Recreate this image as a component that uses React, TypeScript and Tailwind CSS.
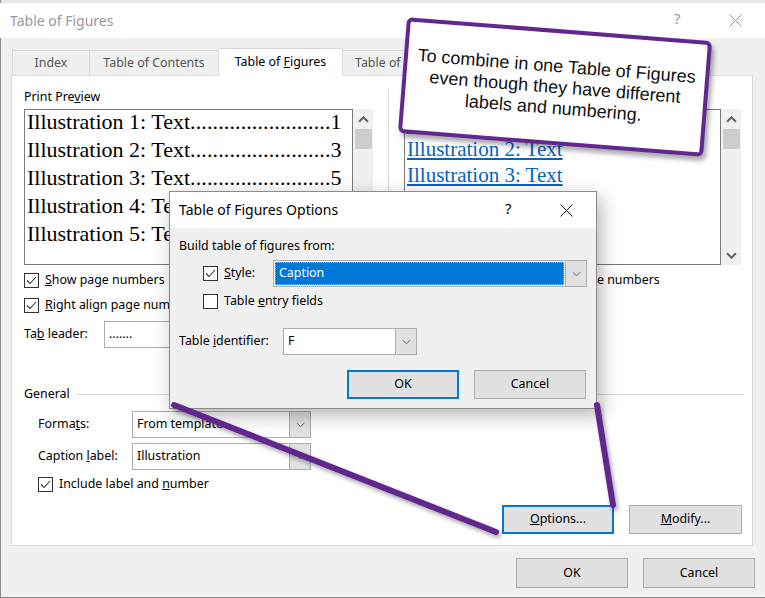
import React from "react";

const Chevron = ({ dir = "down", bold = false }: { dir?: "up" | "down"; bold?: boolean }) => (
  <svg width={bold ? 11 : 9} height={bold ? 7 : 6} viewBox="0 0 10 6" className="block">
    <path
      d={dir === "down" ? "M1 1 L5 5 L9 1" : "M1 5 L5 1 L9 5"}
      fill="none"
      stroke={bold ? "#606060" : "#555"}
      strokeWidth={bold ? 1.8 : 1}
    />
  </svg>
);

const Check = ({ checked }: { checked: boolean }) => (
  <div className="w-[15px] h-[15px] border border-[#333] bg-white shrink-0 flex items-center justify-center">
    {checked && (
      <svg width="11" height="9" viewBox="0 0 11 9" className="block">
        <path d="M1 4.5 L4 7.5 L10 1" fill="none" stroke="#333" strokeWidth="1.1" />
      </svg>
    )}
  </div>
);

const Select = ({ value, w, cls = "" }: { value: string; w: string; cls?: string }) => (
  <div className={`${w} h-[27px] border border-[#adadad] bg-white flex ${cls}`}>
    <div className="flex-1 flex items-center pl-[4px] overflow-hidden whitespace-nowrap">{value}</div>
    <div className="w-[21px] bg-[#e1e1e1] border-l border-[#adadad] flex items-center justify-center">
      <Chevron />
    </div>
  </div>
);

const Btn = ({ children, w, focus = false, cls = "" }: { children: React.ReactNode; w: string; focus?: boolean; cls?: string }) => (
  <div
    className={`${w} h-[29px] bg-[#e1e1e1] flex items-center justify-center ${
      focus ? "border-2 border-[#0078d7]" : "border border-[#adadad]"
    } ${cls}`}
  >
    {children}
  </div>
);

const DOTS = ".........................";

const PreviewLine = ({ n, p }: { n: number; p: number }) => (
  <div className="h-[28px] flex items-center whitespace-nowrap">
    <span>{`Illustration ${n}: Text`}</span>
    <span className="tracking-[0.12px]">{DOTS}</span>
    <span>{p}</span>
  </div>
);

const Scrollbar = () => (
  <div className="w-[20px] bg-[#f0f0f0] flex flex-col items-center">
    <div className="h-[20px] flex items-center justify-center">
      <Chevron dir="up" bold />
    </div>
    <div className="w-[17px] h-[20px] bg-[#cdcdcd]" />
    <div className="flex-1" />
    <div className="h-[20px] flex items-center justify-center">
      <Chevron dir="down" bold />
    </div>
  </div>
);

export default function App() {
  return (
    <div className="w-[765px] h-[598px] relative overflow-hidden bg-[#f0f0f0] text-[12.4px] text-black font-['Noto_Sans',sans-serif] leading-none">
      {/* desktop strip */}
      <div className="h-[3px] bg-[#e6e6e6]" />
      <div className="absolute left-0 top-0 bottom-0 w-px bg-[#8a8a8a]" />
      <div className="absolute left-0 right-0 bottom-0 h-px bg-[#8a8a8a]" />
      {/* Title bar */}
      <div className="h-[35px] bg-white flex items-center pl-[10px] relative">
        <span className="text-[14px] text-[#999]">Table of Figures</span>
        <span className="absolute left-[674px] top-[8px] text-[15px] text-[#999]">?</span>
        <svg className="absolute left-[729px] top-[11px]" width="13" height="13" viewBox="0 0 13 13">
          <path d="M0.5 0.5 L12.5 12.5 M12.5 0.5 L0.5 12.5" stroke="#999" strokeWidth="1" />
        </svg>
      </div>

      {/* Tabs */}
      <div className="flex items-end h-[37px] pl-[12px] text-[#555]">
        <div className="w-[78px] h-[25px] border border-b-0 border-[#d9d9d9] flex items-center justify-center pt-[1px]">Index</div>
        <div className="w-[129px] h-[25px] border-r border-t border-[#d9d9d9] flex items-center justify-center pt-[1px]">Table of Contents</div>
        <div className="w-[124px] h-[28px] border-r border-t border-[#d9d9d9] bg-white text-black flex items-center justify-center -mb-px relative z-10">
          Table of&nbsp;<u>F</u>igures
        </div>
        <div className="w-[130px] h-[25px] border-r border-t border-[#d9d9d9] flex items-center pl-[12px] pt-[1px]">Table of Authorities</div>
      </div>

      {/* Panel */}
      <div className="ml-[11px] w-[742px] h-[471px] border border-[#d9d9d9] bg-white flex flex-col pl-[12px]">
        <div className="flex mt-[15px]">
          {/* left column */}
          <div className="w-[349px] flex flex-col">
            <div className="h-[14px] mb-[4px]">
              Print Pre<u>v</u>iew
            </div>
            <div className="flex h-[156px]">
              <div className="w-[329px] border border-[#7a7a7a] pl-[2px] font-['Liberation_Serif',serif] text-[22px] overflow-hidden">
                <div className="-mt-[2px]">
                  <PreviewLine n={1} p={1} />
                  <PreviewLine n={2} p={3} />
                  <PreviewLine n={3} p={5} />
                  <PreviewLine n={4} p={7} />
                  <PreviewLine n={5} p={9} />
                </div>
              </div>
              <Scrollbar />
            </div>
            <div className="flex items-center gap-[6px] mt-[8px] h-[15px]">
              <Check checked />
              <span>
                <u>S</u>how page numbers
              </span>
            </div>
            <div className="flex items-center gap-[6px] mt-[10px] h-[15px]">
              <Check checked />
              <span>
                <u>R</u>ight align page numbers
              </span>
            </div>
            <div className="flex items-center mt-[8px] h-[27px]">
              <span className="w-[80px]">
                Ta<u>b</u> leader:
              </span>
              <div className="w-[160px] h-[27px] border border-[#adadad] flex items-center pl-[4px]">.......</div>
            </div>
          </div>
          {/* separator */}
          <div className="w-px h-[286px] bg-[#d9d9d9] ml-[15px] -mt-[2px]" />
          {/* right column */}
          <div className="ml-[15px] flex flex-col">
            <div className="h-[14px] mb-[4px]">
              <u>W</u>eb Preview
            </div>
            <div className="flex h-[156px]">
              <div className="w-[317px] border border-[#7a7a7a] pl-[2px] font-['Liberation_Serif',serif] text-[21px] text-[#0563c1]">
                <div className="h-[26px] flex items-center"><span className="underline">Illustration 1: Text</span></div>
                <div className="h-[26px] flex items-center"><span className="underline">Illustration 2: Text</span></div>
                <div className="h-[26px] flex items-center"><span className="underline">Illustration 3: Text</span></div>
              </div>
              <Scrollbar />
            </div>
            <div className="flex items-center gap-[6px] mt-[8px] h-[15px]">
              <Check checked />
              <span>
                <u>U</u>se hyperlinks instead of page numbers
              </span>
            </div>
          </div>
        </div>

        {/* General */}
        <div className="flex items-center mt-[12px] h-[14px]">
          <span>General</span>
          <div className="ml-[6px] w-[668px] h-px bg-[#d9d9d9]" />
        </div>
        <div className="flex items-center mt-[10px] pl-[14px]">
          <span className="w-[94px]">
            Forma<u>t</u>s:
          </span>
          <Select value="From template" w="w-[179px]" />
        </div>
        <div className="flex items-center mt-[5px] pl-[14px]">
          <span className="w-[94px]">
            Caption <u>l</u>abel:
          </span>
          <Select value="Illustration" w="w-[179px]" />
        </div>
        <div className="flex items-center gap-[6px] mt-[7px] pl-[14px] h-[15px]">
          <Check checked />
          <span>
            Include label and <u>n</u>umber
          </span>
        </div>
        <div className="flex mt-[13px] pl-[478px] gap-[15px]">
          <Btn w="w-[112px]" focus>
            <span>
              <u>O</u>ptions...
            </span>
          </Btn>
          <Btn w="w-[113px]">
            <span>
              <u>M</u>odify...
            </span>
          </Btn>
        </div>
      </div>

      {/* bottom buttons */}
      <div className="flex mt-[12px] pl-[516px] gap-[15px]">
        <Btn w="w-[112px]" cls="h-[30px]">OK</Btn>
        <Btn w="w-[112px]" cls="h-[30px]">Cancel</Btn>
      </div>

      {/* Options dialog */}
      <div className="absolute left-[169px] top-[191px] w-[428px] h-[218px] border border-[#8c8c8c] bg-[#f0f0f0] shadow-[4px_6px_18px_rgba(0,0,0,0.3)] flex flex-col">
        <div className="h-[36px] bg-white flex items-center pl-[9px] relative">
          <span className="text-[14px]">Table of Figures Options</span>
          <span className="absolute left-[335px] top-[9px] text-[15px]">?</span>
          <svg className="absolute left-[390px] top-[12px]" width="13" height="13" viewBox="0 0 13 13">
            <path d="M0.5 0.5 L12.5 12.5 M12.5 0.5 L0.5 12.5" stroke="#222" strokeWidth="1" />
          </svg>
        </div>
        <div className="pl-[9px] mt-[12px] h-[14px]">Build table of figures from:</div>
        <div className="flex items-center mt-[6px] pl-[33px]">
          <Check checked />
          <span className="ml-[6px] w-[49px]">
            <u>S</u>tyle:
          </span>
          <div className="w-[314px] h-[27px] border border-[#adadad] bg-white flex">
            <div className="flex-1 m-[1px] bg-[#0078d7] border border-dotted border-[#f0a050] text-white flex items-center pl-[3px]">
              Caption
            </div>
            <div className="w-[21px] bg-[#e1e1e1] border-l border-[#adadad] flex items-center justify-center">
              <Chevron />
            </div>
          </div>
        </div>
        <div className="flex items-center mt-[7px] pl-[33px] h-[15px]">
          <Check checked={false} />
          <span className="ml-[6px]">
            Table <u>e</u>ntry fields
          </span>
        </div>
        <div className="flex items-center mt-[19px] pl-[9px]">
          <span className="w-[104px]">
            Table <u>i</u>dentifier:
          </span>
          <Select value="F" w="w-[134px]" />
        </div>
        <div className="flex mt-[15px] pl-[177px] gap-[15px]">
          <Btn w="w-[112px]" focus>OK</Btn>
          <Btn w="w-[112px]">Cancel</Btn>
        </div>
      </div>

      {/* Callout */}
      <div className="absolute left-[402px] top-[29px] w-[306px] h-[116px] rotate-[4.5deg] bg-white border-[4px] border-[#62288f] rounded-[6px] shadow-[3px_4px_5px_rgba(0,0,0,0.35)] flex items-center justify-center text-center font-['Liberation_Sans',Arial,sans-serif] text-[18px] leading-[21px] text-[#111]">
        <div>
          To combine in one Table of Figures
          <br />
          even though they have different
          <br />
          labels and numbering.
        </div>
      </div>

      {/* Purple connector lines */}
      <svg className="absolute left-0 top-0 pointer-events-none" width="765" height="598" viewBox="0 0 765 598">
        <defs>
          <filter id="sh" x="-20%" y="-20%" width="140%" height="140%">
            <feDropShadow dx="2" dy="3" stdDeviation="2" floodColor="#000" floodOpacity="0.35" />
          </filter>
        </defs>
        <g filter="url(#sh)" stroke="#62288f" strokeWidth="6" strokeLinecap="round" fill="none">
          <line x1="174" y1="405" x2="496" y2="532" />
          <line x1="597" y1="405" x2="613" y2="505" />
        </g>
      </svg>
    </div>
  );
}
